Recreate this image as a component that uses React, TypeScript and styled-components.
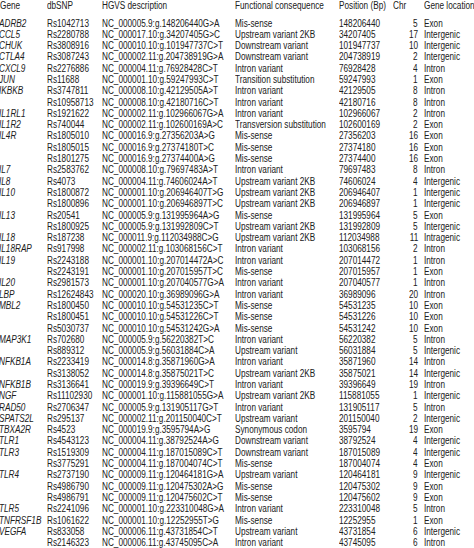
import React from "react";
import styled, { createGlobalStyle } from "styled-components";

const GlobalStyle = createGlobalStyle`
  html, body {
    margin: 0;
    padding: 0;
    background: #ffffff;
  }
  body {
    font-family: "Liberation Sans", Arial, sans-serif;
    color: #202020;
    overflow: hidden;
  }
`;

type Row = [string, string, string, string, string, string, string];

const rows: Row[] = [
  ["ADRB2", "Rs1042713", "NC_000005.9:g.148206440G>A", "Mis-sense", "148206440", "5", "Exon"],
  ["CCL5", "Rs2280788", "NC_000017.10:g.34207405G>C", "Upstream variant 2KB", "34207405", "17", "Intergenic"],
  ["CHUK", "Rs3808916", "NC_000010.10:g.101947737C>T", "Downstream variant", "101947737", "10", "Intergenic"],
  ["CTLA4", "Rs3087243", "NC_000002.11:g.204738919G>A", "Downstream variant", "204738919", "2", "Intergenic"],
  ["CXCL9", "Rs2276886", "NC_000004.11:g.76928428C>T", "Intron variant", "76928428", "4", "Intron"],
  ["JUN", "Rs11688", "NC_000001.10:g.59247993C>T", "Transition substitution", "59247993", "1", "Exon"],
  ["IKBKB", "Rs3747811", "NC_000008.10:g.42129505A>T", "Intron variant", "42129505", "8", "Intron"],
  ["", "Rs10958713", "NC_000008.10:g.42180716C>T", "Intron variant", "42180716", "8", "Intron"],
  ["IL1RL1", "Rs1921622", "NC_000002.11:g.102966067G>A", "Intron variant", "102966067", "2", "Intron"],
  ["IL1R2", "Rs740044", "NC_000002.11:g.102600169A>C", "Transversion substitution", "102600169", "2", "Exon"],
  ["IL4R", "Rs1805010", "NC_000016.9:g.27356203A>G", "Mis-sense", "27356203", "16", "Exon"],
  ["", "Rs1805015", "NC_000016.9:g.27374180T>C", "Mis-sense", "27374180", "16", "Exon"],
  ["", "Rs1801275", "NC_000016.9:g.27374400A>G", "Mis-sense", "27374400", "16", "Exon"],
  ["IL7", "Rs2583762", "NC_000008.10:g.79697483A>T", "Intron variant", "79697483", "8", "Intron"],
  ["IL8", "Rs4073", "NC_000004.11:g.74606024A>T", "Upstream variant 2KB", "74606024", "4", "Intergenic"],
  ["IL10", "Rs1800872", "NC_000001.10:g.206946407T>G", "Upstream variant 2KB", "206946407", "1", "Intergenic"],
  ["", "Rs1800896", "NC_000001.10:g.206946897T>C", "Upstream variant 2KB", "206946897", "1", "Intergenic"],
  ["IL13", "Rs20541", "NC_000005.9:g.131995964A>G", "Mis-sense", "131995964", "5", "Exon"],
  ["", "Rs1800925", "NC_000005.9:g.131992809C>T", "Upstream variant 2KB", "131992809", "5", "Intergenic"],
  ["IL18", "Rs187238", "NC_000011.9:g.112034988C>G", "Upstream variant 2KB", "112034988", "11", "Intragenic"],
  ["IL18RAP", "Rs917998", "NC_000002.11:g.103068156C>T", "Intron variant", "103068156", "2", "Intron"],
  ["IL19", "Rs2243188", "NC_000001.10:g.207014472A>C", "Intron variant", "207014472", "1", "Intron"],
  ["", "Rs2243191", "NC_000001.10:g.207015957T>C", "Mis-sense", "207015957", "1", "Exon"],
  ["IL20", "Rs2981573", "NC_000001.10:g.207040577G>A", "Intron variant", "207040577", "1", "Intron"],
  ["LBP", "Rs12624843", "NC_000020.10:g.36989096G>A", "Intron variant", "36989096", "20", "Intron"],
  ["MBL2", "Rs1800450", "NC_000010.10:g.54531235C>T", "Mis-sense", "54531235", "10", "Exon"],
  ["", "Rs1800451", "NC_000010.10:g.54531226C>T", "Mis-sense", "54531226", "10", "Exon"],
  ["", "Rs5030737", "NC_000010.10:g.54531242G>A", "Mis-sense", "54531242", "10", "Exon"],
  ["MAP3K1", "Rs702680", "NC_000005.9:g.56220382T>C", "Intron variant", "56220382", "5", "Intron"],
  ["", "Rs889312", "NC_000005.9:g.56031884C>A", "Upstream variant", "56031884", "5", "Intergenic"],
  ["NFKB1A", "Rs2233419", "NC_000014.8:g.35871960G>A", "Intron variant", "35871960", "14", "Intron"],
  ["", "Rs3138052", "NC_000014.8:g.35875021T>C", "Upstream variant 2KB", "35875021", "14", "Intergenic"],
  ["NFKB1B", "Rs3136641", "NC_000019.9:g.39396649C>T", "Intron variant", "39396649", "19", "Intron"],
  ["NGF", "Rs11102930", "NC_000001.10:g.115881055G>A", "Upstream variant 2KB", "115881055", "1", "Intergenic"],
  ["RAD50", "Rs2706347", "NC_000005.9:g.131905117G>T", "Intron variant", "131905117", "5", "Intron"],
  ["SPATS2L", "Rs295137", "NC_000002.11:g.201150040C>T", "Upstream variant", "201150040", "2", "Intergenic"],
  ["TBXA2R", "Rs4523", "NC_000019.9:g.3595794A>G", "Synonymous codon", "3595794", "19", "Exon"],
  ["TLR1", "Rs4543123", "NC_000004.11:g.38792524A>G", "Downstream variant", "38792524", "4", "Intergenic"],
  ["TLR3", "Rs1519309", "NC_000004.11:g.187015089C>T", "Downstream variant", "187015089", "4", "Intergenic"],
  ["", "Rs3775291", "NC_000004.11:g.187004074C>T", "Mis-sense", "187004074", "4", "Exon"],
  ["TLR4", "Rs2737190", "NC_000009.11:g.120464181G>A", "Upstream variant", "120464181", "9", "Intergenic"],
  ["", "Rs4986790", "NC_000009.11:g.120475302A>G", "Mis-sense", "120475302", "9", "Exon"],
  ["", "Rs4986791", "NC_000009.11:g.120475602C>T", "Mis-sense", "120475602", "9", "Exon"],
  ["TLR5", "Rs2241096", "NC_000001.10:g.223310048G>A", "Intron variant", "223310048", "5", "Intron"],
  ["TNFRSF1B", "Rs1061622", "NC_000001.10:g.12252955T>G", "Mis-sense", "12252955", "1", "Exon"],
  ["VEGFA", "Rs833058", "NC_000006.11:g.43731854C>T", "Upstream variant", "43731854", "6", "Intergenic"],
  ["", "Rs2146323", "NC_000006.11:g.43745095C>A", "Intron variant", "43745095", "6", "Intron"],
];

const head = ["Gene", "dbSNP", "HGVS description", "Functional consequence", "Position (Bp)", "Chr", "Gene location"];

const Table = styled.div`
  width: 474px;
  font-size: 10px;
  line-height: 11.3px;
  white-space: nowrap;
`;

const Line = styled.div<{ $head?: boolean }>`
  display: grid;
  grid-template-columns: 47px 55px 133px 104px 54px 31px 1fr;
  height: ${(p) => (p.$head ? "17.5px" : "11.3px")};
  align-items: start;
`;

const Cell = styled.div<{ $italic?: boolean; $right?: boolean }>`
  font-style: ${(p) => (p.$italic ? "italic" : "normal")};
  text-align: ${(p) => (p.$right ? "right" : "left")};
  padding-right: ${(p) => (p.$right ? "6px" : "0")};
  margin-left: ${(p) => (p.$italic ? "-1px" : "0")};
`;

// source face is a narrow humanist sans; squeeze the sans to its widths
const Text = styled.span<{ $right?: boolean }>`
  display: inline-block;
  transform: scaleX(0.82);
  transform-origin: ${(p) => (p.$right ? "right center" : "left center")};
`;

export default function App() {
  return (
    <>
      <GlobalStyle />
      <Table>
        <Line $head>
          {head.map((h) => (
            <Cell key={h}>
              <Text>{h}</Text>
            </Cell>
          ))}
        </Line>
        {rows.map((r, i) => (
          <Line key={i}>
            <Cell $italic>
              <Text>{r[0]}</Text>
            </Cell>
            <Cell>
              <Text>{r[1]}</Text>
            </Cell>
            <Cell>
              <Text>{r[2]}</Text>
            </Cell>
            <Cell>
              <Text>{r[3]}</Text>
            </Cell>
            <Cell>
              <Text>{r[4]}</Text>
            </Cell>
            <Cell $right>
              <Text $right>{r[5]}</Text>
            </Cell>
            <Cell>
              <Text>{r[6]}</Text>
            </Cell>
          </Line>
        ))}
      </Table>
    </>
  );
}
